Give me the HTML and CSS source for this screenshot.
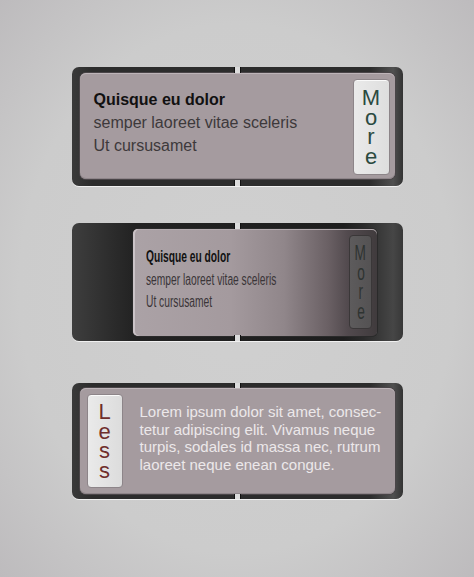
FILE: index.html
```html
<!DOCTYPE html>
<html>
<head>
<meta charset="UTF-8">
<meta name="viewport" content="width=device-width, initial-scale=1.0">
<title>Sliding Panels</title>
<link rel="stylesheet" href="styles.css">
</head>
<body>
<div class="page">

  <div class="frame frame-one">
    <div class="panel">
      <div class="copy">
        <h3>Quisque eu dolor</h3>
        <p>semper laoreet vitae sceleris</p>
        <p>Ut cursusamet</p>
      </div>
      <button type="button" class="tab tab-more"><span>M</span><span>o</span><span>r</span><span>e</span></button>
    </div>
    <span class="notch notch-top"></span>
    <span class="notch notch-bottom"></span>
  </div>

  <div class="frame frame-two">
    <div class="panel panel-moving">
      <div class="copy copy-narrow">
        <div class="squeeze">
          <h3>Quisque eu dolor</h3>
          <p>semper laoreet vitae sceleris</p>
          <p>Ut cursusamet</p>
        </div>
      </div>
      <button type="button" class="tab tab-dark"><span>M</span><span>o</span><span>r</span><span>e</span></button>
    </div>
    <span class="notch notch-top"></span>
    <span class="notch notch-bottom"></span>
  </div>

  <div class="frame frame-three">
    <div class="panel">
      <button type="button" class="tab tab-less"><span>L</span><span>e</span><span>s</span><span>s</span></button>
      <p class="lorem">Lorem ipsum dolor sit amet, consec-<br>tetur adipiscing elit. Vivamus neque<br>turpis, sodales id massa nec, rutrum<br>laoreet neque enean congue.</p>
    </div>
    <span class="notch notch-top"></span>
    <span class="notch notch-bottom"></span>
  </div>

</div>
</body>
</html>
```

FILE: styles.css
```css
html, body {
  margin: 0;
  padding: 0;
  height: 100%;
}

body {
  font-family: "Liberation Sans", Arial, sans-serif;
  background: radial-gradient(ellipse at center, #d0d0d0 0%, #cccccc 65%, #bdbbbd 100%);
}

.page {
  display: flex;
  flex-direction: column;
  align-items: center;
  padding-top: 67px;
}

.frame {
  position: relative;
  width: 331px;
  box-sizing: border-box;
  border-radius: 7px;
  background: linear-gradient(to right, #3a3a3a 0%, #2c2c2c 6%, #2c2c2c 90%, #505050 97%, #333 100%);
  box-shadow: 0 1px 0 rgba(255, 255, 255, 0.7);
  display: flex;
}

.frame-one {
  height: 119px;
  padding: 6px 8px 7px 8px;
}

.frame-two {
  height: 118px;
  margin-top: 37px;
  padding: 6px 64px 5px 61px;
  background: linear-gradient(to right, #3e3e3e 0%, #2c2c2c 12%, #222 19%, #1e1e1e 82%, #2a2a2a 88%, #464646 97%, #383838 100%);
}

.frame-three {
  height: 116px;
  margin-top: 42px;
  padding: 5px 8px 5px 8px;
}

.notch {
  position: absolute;
  left: 162px;
  width: 5px;
  background: #dcdcdc;
  border-left: 1px solid #111;
  border-right: 1px solid #111;
}

.notch-top {
  top: 0;
  height: 6px;
}

.notch-bottom {
  bottom: 0;
  height: 6px;
}

.frame-three .notch {
  height: 5px;
}

.panel {
  flex: 1;
  display: flex;
  border-radius: 6px;
  background: #a59b9f;
  box-shadow: inset 0 1px 0 #bdb4b8, inset 0 -1px 0 #8e8589, 0 0 0 1px #4a4548;
}

.panel-moving {
  border-radius: 5px;
  background: linear-gradient(to right, #aba2a6 0%, #a49a9e 40%, #90868a 62%, #6a6064 80%, #524a4e 88%, #403b3d 100%);
  box-shadow: inset 2px 0 0 #cbc3c7, inset 0 1px 0 #b5acb0, 0 0 0 1px #2a2a2a;
}

.copy {
  flex: 1;
  padding: 15px 0 0 14px;
}

.copy h3,
.copy p {
  margin: 0;
  font-size: 16px;
  line-height: 23px;
  white-space: nowrap;
}

.copy h3 {
  color: #111;
  font-weight: bold;
}

.copy p {
  color: #3d393b;
}

.copy-narrow {
  padding: 17px 0 0 13px;
}

.squeeze {
  transform: scaleX(0.64);
  transform-origin: left top;
}

.copy-narrow h3,
.copy-narrow p {
  line-height: 22.5px;
}

.copy-narrow p {
  color: #3a3538;
}

.tab {
  font-family: "Liberation Sans", Arial, sans-serif;
  font-size: 22px;
  line-height: 19.5px;
  padding: 0;
  width: 37px;
  border-radius: 4px;
  display: flex;
  flex-direction: column;
  align-items: center;
  justify-content: center;
  cursor: pointer;
}

.tab span {
  display: block;
}

.tab-more {
  margin: 6px 5px 4px 0;
  color: #2b4a40;
  background: linear-gradient(to right, #eaeaea, #dedede);
  border: 1px solid #8d8589;
  box-shadow: inset 0 1px 0 #fafafa;
}

.tab-less {
  width: 36px;
  margin: 6px 0 6px 7px;
  color: #6f2e2c;
  background: linear-gradient(to right, #eaeaea, #dcdcdc);
  border: 1px solid #8d8589;
  box-shadow: inset 0 1px 0 #fafafa;
}

.tab-dark {
  width: 23px;
  margin: 6px 5px 7px 0;
  color: #2e3331;
  background: linear-gradient(to right, #5d5b5c, #545253);
  border: 1px solid #3a3738;
}

.tab-dark span {
  transform: scaleX(0.62);
}

.lorem {
  margin: 0;
  padding: 15px 0 0 17px;
  font-size: 15px;
  line-height: 17.5px;
  color: #ece8ea;
  white-space: nowrap;
}
```
